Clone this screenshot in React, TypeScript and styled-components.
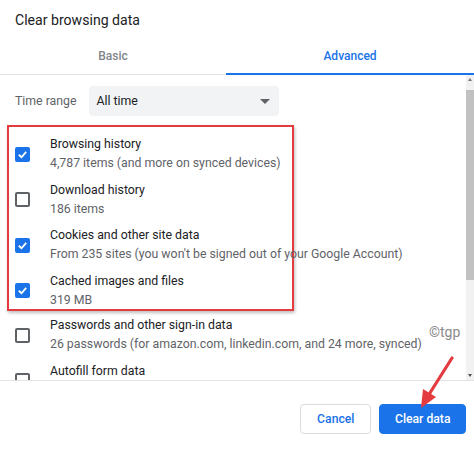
import styled, { createGlobalStyle } from 'styled-components';

const GlobalStyle = createGlobalStyle`
  html, body {
    margin: 0;
    padding: 0;
    background: #fff;
  }
  body {
    font-family: Roboto, 'Liberation Sans', Arial, sans-serif;
    -webkit-font-smoothing: antialiased;
  }
`;

interface Item {
  title: string;
  detail: string;
  checked: boolean;
}

const highlighted: Item[] = [
  { title: 'Browsing history', detail: '4,787 items (and more on synced devices)', checked: true },
  { title: 'Download history', detail: '186 items', checked: false },
  {
    title: 'Cookies and other site data',
    detail: "From 235 sites (you won't be signed out of your Google Account)",
    checked: true,
  },
  { title: 'Cached images and files', detail: '319 MB', checked: true },
];

const rest: Item[] = [
  {
    title: 'Passwords and other sign-in data',
    detail: '26 passwords (for amazon.com, linkedin.com, and 24 more, synced)',
    checked: false,
  },
  { title: 'Autofill form data', detail: '', checked: false },
];

const Check = ({ checked }: { checked: boolean }) => (
  <CheckBox $checked={checked}>
    {checked && (
      <svg width="11" height="11" viewBox="0 0 12 12">
        <path d="M2 6.3 L4.9 9 L10 3.2" fill="none" stroke="#fff" strokeWidth="2" />
      </svg>
    )}
  </CheckBox>
);

const DataRow = ({ item, inset }: { item: Item; inset?: boolean }) => (
  <Row $inset={inset}>
    <Check checked={item.checked} />
    <RowText>
      <RowTitle>{item.title}</RowTitle>
      <RowDetail>{item.detail}</RowDetail>
    </RowText>
  </Row>
);

const App = () => {
  return (
    <>
      <GlobalStyle />
      <Dialog>
        <Title>Clear browsing data</Title>
        <Tabs>
          <Tab>Basic</Tab>
          <Tab $active>Advanced</Tab>
        </Tabs>
        <Body>
          <Scroller>
            <TimeRow>
              <TimeLabel>Time range</TimeLabel>
              <Select>
                All time
                <Caret />
              </Select>
            </TimeRow>
            <Highlight>
              {highlighted.map((item) => (
                <DataRow key={item.title} item={item} inset />
              ))}
            </Highlight>
            <List>
              {rest.map((item) => (
                <DataRow key={item.title} item={item} />
              ))}
            </List>
          </Scroller>
          <Scrollbar>
            <ScrollArrow $dir="up" />
            <Thumb />
            <ScrollArrow $dir="down" />
          </Scrollbar>
          <Watermark>©tgp</Watermark>
        </Body>
        <Footer>
          <Button>Cancel</Button>
          <Button $primary>Clear data</Button>
          <Pointer width="60" height="60" viewBox="0 0 60 60">
            <line x1="41" y1="2" x2="17" y2="40" stroke="#e33b3f" strokeWidth="3.2" strokeLinecap="round" />
            <polygon points="10,52 12,33 25,41" fill="#e33b3f" />
          </Pointer>
        </Footer>
      </Dialog>
    </>
  );
};

export default App;

const Dialog = styled.div`
  width: 474px;
  height: 449px;
  display: flex;
  flex-direction: column;
  background: #fff;
  overflow: hidden;
`;

const Title = styled.div`
  flex: none;
  height: 38px;
  padding: 12px 0 0 15px;
  box-sizing: border-box;
  font-size: 14.1px;
  color: #202124;
`;

const Tabs = styled.div`
  flex: none;
  display: grid;
  grid-template-columns: 226px 1fr;
  height: 37px;
  border-bottom: 1px solid #e3e3e3;
  box-sizing: border-box;
`;

const Tab = styled.div<{ $active?: boolean }>`
  display: flex;
  align-items: center;
  justify-content: center;
  padding-top: 1px;
  font-size: 12px;
  font-weight: 500;
  color: ${(p) => (p.$active ? '#1a73e8' : '#80868b')};
  border-bottom: 2px solid ${(p) => (p.$active ? '#1a73e8' : 'transparent')};
  margin-bottom: -1px;
`;

const Body = styled.div`
  position: relative;
  flex: none;
  height: 305px;
  min-height: 0;
  overflow: hidden;
  display: flex;
  border-bottom: 1px solid #e3e3e3;
`;

const Scroller = styled.div`
  flex: 1;
  overflow: hidden;
  padding-top: 11px;
`;

const TimeRow = styled.div`
  display: flex;
  align-items: center;
  gap: 12px;
  padding-left: 15px;
`;

const TimeLabel = styled.span`
  font-size: 12.3px;
  color: #5f6368;
`;

const Select = styled.div`
  width: 190px;
  height: 30px;
  box-sizing: border-box;
  display: flex;
  align-items: center;
  justify-content: space-between;
  padding: 0 9px 0 8px;
  background: #f1f3f4;
  border-radius: 4px;
  font-size: 12.3px;
  color: #202124;
`;

const Caret = styled.span`
  width: 0;
  height: 0;
  border-left: 5px solid transparent;
  border-right: 5px solid transparent;
  border-top: 5px solid #5f6368;
`;

const Highlight = styled.div`
  margin: 9px 0 0 7px;
  width: 287px;
  height: 186px;
  box-sizing: border-box;
  border: 2px solid #e33b3f;
  box-shadow: 1px 2px 3px rgba(0, 0, 0, 0.25);
  padding-top: 8px;
  display: flex;
  flex-direction: column;
  gap: 7.5px;
`;

const List = styled.div`
  margin-top: 5px;
  display: flex;
  flex-direction: column;
  gap: 7.5px;
`;

const Row = styled.div<{ $inset?: boolean }>`
  flex: none;
  display: flex;
  align-items: center;
  gap: 20px;
  padding-left: ${(p) => (p.$inset ? '6px' : '15px')};
  height: 38px;
`;

const CheckBox = styled.span<{ $checked: boolean }>`
  flex: 0 0 15px;
  width: 15px;
  height: 15px;
  box-sizing: border-box;
  border-radius: 2px;
  display: flex;
  align-items: center;
  justify-content: center;
  background: ${(p) => (p.$checked ? '#1a73e8' : '#fff')};
  border: ${(p) => (p.$checked ? 'none' : '2px solid #5f6368')};
`;

const RowText = styled.div`
  display: flex;
  flex-direction: column;
  white-space: nowrap;
`;

const RowTitle = styled.span`
  font-size: 12.3px;
  line-height: 19px;
  color: #202124;
`;

const RowDetail = styled.span`
  min-height: 19px;
  font-size: 12.3px;
  line-height: 19px;
  color: #5f6368;
`;

const Scrollbar = styled.div`
  flex: 0 0 8px;
  display: flex;
  flex-direction: column;
  background: #f1f1f1;
`;

const Thumb = styled.div`
  margin-top: 6px;
  height: 190px;
  background: #c1c1c1;
`;

const ScrollArrow = styled.div<{ $dir: 'up' | 'down' }>`
  height: 9px;
  display: flex;
  justify-content: center;
  align-items: center;
  margin-top: ${(p) => (p.$dir === 'down' ? 'auto' : '0')};

  &::before {
    content: '';
    border-left: 2.5px solid transparent;
    border-right: 2.5px solid transparent;
    ${(p) =>
      p.$dir === 'up' ? 'border-bottom: 3px solid #777;' : 'border-top: 3px solid #505050;'}
  }
`;

const Watermark = styled.span`
  position: absolute;
  left: 429px;
  top: 249px;
  font-size: 14px;
  color: #8a8a8a;
`;

const Footer = styled.div`
  position: relative;
  flex: none;
  display: flex;
  justify-content: flex-end;
  gap: 8px;
  padding: 23px 8px 0 0;
`;

const Button = styled.button<{ $primary?: boolean }>`
  height: 30px;
  padding: 0 ${(p) => (p.$primary ? '14.5px' : '16px')};
  border-radius: 4px;
  font-family: inherit;
  font-size: 12.2px;
  font-weight: 500;
  cursor: pointer;
  border: 1px solid ${(p) => (p.$primary ? '#1a73e8' : '#dadce0')};
  background: ${(p) => (p.$primary ? '#1a73e8' : '#fff')};
  color: ${(p) => (p.$primary ? '#fff' : '#1a73e8')};
`;

const Pointer = styled.svg`
  position: absolute;
  left: 411px;
  top: -25px;
  pointer-events: none;
`;
